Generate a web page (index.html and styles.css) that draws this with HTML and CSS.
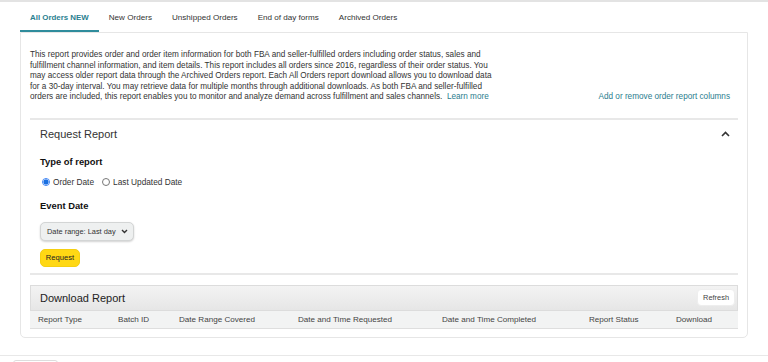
FILE: index.html
```html
<!DOCTYPE html>
<html>
<head>
<meta charset="utf-8">
<link rel="stylesheet" href="styles.css">
</head>
<body>
<div class="topline"></div>
<div class="page">
  <nav class="tabs">
    <a class="tab active">All Orders NEW</a>
    <a class="tab">New Orders</a>
    <a class="tab">Unshipped Orders</a>
    <a class="tab">End of day forms</a>
    <a class="tab">Archived Orders</a>
  </nav>
  <section class="panel">
    <div class="intro">
      <p class="desc">This report provides order and order item information for both FBA and seller-fulfilled orders including order status, sales and fulfillment channel information, and item details. This report includes all orders since 2016, regardless of their order status. You may access older report data through the Archived Orders report. Each All Orders report download allows you to download data for a 30-day interval. You may retrieve data for multiple months through additional downloads. As both FBA and seller-fulfilled orders are included, this report enables you to monitor and analyze demand across fulfillment and sales channels. &nbsp;<a class="link">Learn more</a></p>
      <a class="link cols">Add or remove order report columns</a>
    </div>
    <div class="request">
      <div class="req-head">
        <h2>Request Report</h2>
        <svg class="chev" width="9" height="6" viewBox="0 0 9 6"><path d="M1 5 L4.5 1.5 L8 5" fill="none" stroke="#333" stroke-width="1.6"/></svg>
      </div>
      <h3>Type of report</h3>
      <div class="radios">
        <label class="radio"><span class="dot on"></span>Order Date</label>
        <label class="radio"><span class="dot"></span>Last Updated Date</label>
      </div>
      <h3 class="ev">Event Date</h3>
      <div class="select">Date range: Last day
        <svg width="7" height="5" viewBox="0 0 7 5"><path d="M1 1 L3.5 3.5 L6 1" fill="none" stroke="#333" stroke-width="1.4"/></svg>
      </div>
      <button class="btn-yellow">Request</button>
    </div>
    <div class="download">
      <div class="dl-head">
        <h2>Download Report</h2>
        <button class="refresh">Refresh</button>
      </div>
      <div class="cols-row">
        <span class="c1">Report Type</span>
        <span class="c2">Batch ID</span>
        <span class="c3">Date Range Covered</span>
        <span class="c4">Date and Time Requested</span>
        <span class="c5">Date and Time Completed</span>
        <span class="c6">Report Status</span>
        <span class="c7">Download</span>
      </div>
    </div>
  </section>
</div>
<div class="footer"><div class="footbox"></div></div>
</body>
</html>
```
FILE: styles.css
```css
* { box-sizing: border-box; }
html, body { margin: 0; padding: 0; background: #fff; }
body {
  font-family: "Liberation Sans", Arial, sans-serif;
  color: #333;
  width: 768px;
  height: 362px;
  overflow: hidden;
}
.topline { height: 2px; background: #e3e3e3; }
.page { padding-left: 20px; width: 748px; }
.tabs { display: flex; height: 30px; }
.tab {
  padding: 0 10px;
  font-size: 8.1px;
  line-height: 32px;
  height: 30px;
  color: #333;
  border-bottom: 2px solid transparent;
  white-space: nowrap;
}
.tab.active { color: #2a7f90; font-weight: 700; font-size: 7.9px; border-bottom-color: #2f8c9c; }
.panel {
  border: 1px solid #e6e6e6;
  border-radius: 0 0 5px 5px;
  padding: 0 9px 8px 9px;
  height: 306px;
}
.intro {
  display: flex;
  justify-content: space-between;
  align-items: flex-end;
  padding: 17px 0 15px 0;
  border-bottom: 2px solid #e8e8e8;
}
.desc {
  margin: 0;
  width: 462px;
  font-size: 8.2px;
  line-height: 10.5px;
  color: #333;
}
.link { color: #2b7d8e; }
.cols { font-size: 8.2px; line-height: 10.5px; margin-right: 8px; white-space: nowrap; }
.request { padding: 6px 10px 6px 10px; border-bottom: 2px solid #e8e8e8; }
.req-head { display: flex; justify-content: space-between; align-items: center; height: 16px; }
h2 { margin: 0; font-weight: 400; font-size: 11px; color: #333; }
.chev { margin-right: -2px; }
h3 { margin: 14px 0 0 0; font-size: 9.4px; font-weight: 700; color: #111; line-height: 12px; }
.radios { display: flex; gap: 6px; margin-top: 9px; font-size: 8.3px; color: #333; }
.radio { display: flex; align-items: center; gap: 3px; }
.dot {
  width: 8px; height: 8px; border-radius: 50%;
  border: 1px solid #777; background: #fff; display: inline-block;
  margin-left: 2px;
}
.dot.on { border: 1px solid #3b82f6; background: radial-gradient(circle, #1a6fe0 0 2.3px, #fff 2.8px); }
.ev { margin-top: 13px; }
.select {
  margin-top: 10px;
  display: inline-flex; align-items: center; gap: 5px;
  height: 19px; padding: 0 5px 0 6px;
  background: #eef0f0; border: 1px solid #d3d5d5; border-radius: 5px;
  box-shadow: 0 1px 2px rgba(0,0,0,0.18);
  font-size: 7.4px; color: #333;
}
.btn-yellow {
  display: block; margin-top: 8px;
  width: 40px; height: 18px;
  background: #ffd814; border: 1px solid #f5cf10; border-radius: 5px;
  font-family: inherit; font-size: 7.6px; color: #222; padding: 0;
}
.download { margin-top: 10px; }
.dl-head {
  display: flex; justify-content: space-between; align-items: center;
  height: 26px; padding: 0 2px 0 9px;
  background: linear-gradient(#f3f3f3, #e6e6e6);
  border: 1px solid #dcdcdc;
}
.dl-head h2 { font-size: 11px; color: #222; }
.refresh {
  font-family: inherit; font-size: 7.4px; color: #444;
  background: #fff; border: 1px solid #eeeeee; border-radius: 4px;
  height: 17px; padding: 0 5px;
}
.cols-row {
  display: flex; align-items: center;
  height: 18px; background: #f2f3f3;
  border-bottom: 1px solid #dedede;
  font-size: 8.1px; color: #444;
}
.cols-row span { white-space: nowrap; }
.c1 { margin-left: 8px; width: 80px; }
.c2 { width: 61px; }
.c3 { width: 119px; }
.c4 { width: 144px; }
.c5 { width: 147px; }
.c6 { width: 87px; }
.footer { margin-top: 17px; border-top: 1px solid #e8e8e8; height: 7px; padding-left: 13px; padding-top: 4px; overflow: hidden; }
.footbox { width: 45px; height: 10px; border: 1px solid #ddd; border-radius: 3px; }
```
